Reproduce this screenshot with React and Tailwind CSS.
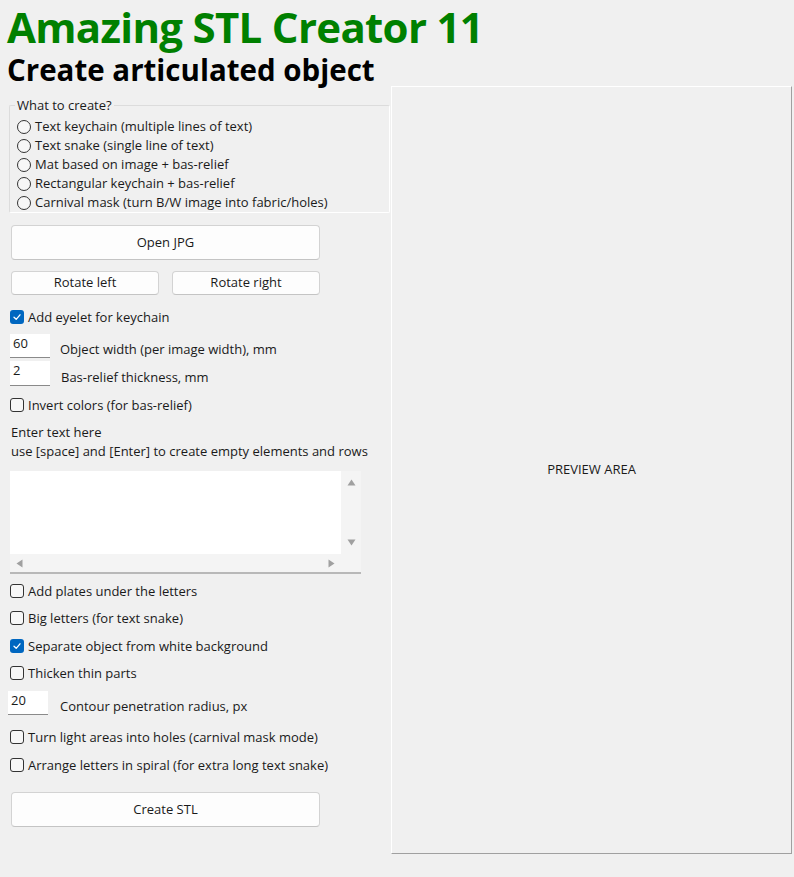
import React from "react";

const font = { fontFamily: '"Open Sans", "Noto Sans", sans-serif' };

function Radio({ label }) {
  return (
    <div className="flex items-center h-[19px] pl-[7px]">
      <span className="w-[14px] h-[14px] rounded-full border border-[#333] bg-[#f7f7f7] shrink-0" />
      <span className="ml-[4px] text-[13px] text-[#1a1a1a] leading-none">{label}</span>
    </div>
  );
}

function Check({ label, checked, className = "" }) {
  return (
    <div className={"flex items-center h-[18px] pl-[10px] " + className}>
      {checked ? (
        <span className="w-[14px] h-[14px] rounded-[3px] bg-[#0067c0] flex items-center justify-center shrink-0">
          <svg width="10" height="10" viewBox="0 0 10 10">
            <path d="M2 5.2 L4.2 7.3 L8 2.8" fill="none" stroke="#fff" strokeWidth="1.3" strokeLinecap="round" strokeLinejoin="round" />
          </svg>
        </span>
      ) : (
        <span className="w-[14px] h-[14px] rounded-[3px] border border-[#333] bg-[#f7f7f7] shrink-0" />
      )}
      <span className="ml-[4px] text-[13px] text-[#1a1a1a] leading-none">{label}</span>
    </div>
  );
}

function Btn({ children, className = "" }) {
  return (
    <div
      className={
        "flex items-center justify-center bg-[#fdfdfd] border border-[#d3d3d3] border-b-[#c4c4c4] rounded-[4px] text-[13px] text-[#1a1a1a] " +
        className
      }
    >
      {children}
    </div>
  );
}

function NumInput({ value, label, className = "" }) {
  return (
    <div className={"flex items-end " + className}>
      <div className="w-[40px] h-full bg-white border-b border-[#8a8a8a] text-[13px] text-[#1a1a1a] pl-[3px] pt-[3px] leading-none">
        {value}
      </div>
      <span className="text-[13px] text-[#1a1a1a] leading-none pb-[2px]">{label}</span>
    </div>
  );
}

export default function App() {
  return (
    <div className="w-[794px] h-[877px] bg-[#f0f0f0] overflow-hidden" style={font}>
      <div className="pl-[7px]">
        <div className="text-[42px] font-bold text-[#008000] leading-[54px] h-[54px] tracking-[-0.7px] whitespace-nowrap">
          Amazing STL Creator 11
        </div>
        <div className="text-[29.5px] font-bold text-black leading-[32px] h-[32px] whitespace-nowrap">
          Create articulated object
        </div>
      </div>
      <div className="flex items-start">
        <div className="w-[391px] shrink-0">
          <fieldset className="mt-[12px] ml-[9px] w-[381px] h-[115px] border border-[#dcdcdc] border-r-[#fff] border-b-[#fff] rounded-[2px]">
            <legend className="ml-[5px] px-[2px] text-[13px] text-[#1a1a1a] leading-[14px]">What to create?</legend>
            <div className="pt-[5px]">
              <Radio label="Text keychain (multiple lines of text)" />
              <Radio label="Text snake (single line of text)" />
              <Radio label="Mat based on image + bas-relief" />
              <Radio label="Rectangular keychain + bas-relief" />
              <Radio label="Carnival mask (turn B/W image into fabric/holes)" />
            </div>
          </fieldset>

          <Btn className="mt-[12px] ml-[11px] w-[309px] h-[35px]">Open JPG</Btn>
          <div className="flex mt-[11px] ml-[11px] gap-[13px]">
            <Btn className="w-[148px] h-[24px]">Rotate left</Btn>
            <Btn className="w-[148px] h-[24px]">Rotate right</Btn>
          </div>

          <Check className="mt-[13px]" label="Add eyelet for keychain" checked />

          <NumInput className="mt-[8px] ml-[10px] h-[24px] gap-[10px]" value="60" label="Object width (per image width), mm" />
          <NumInput className="mt-[3px] ml-[10px] h-[25px] gap-[11px]" value="2" label="Bas-relief thickness, mm" />

          <Check className="mt-[10px]" label="Invert colors (for bas-relief)" />

          <div className="mt-[9px] ml-[11px] text-[13px] text-[#1a1a1a] leading-[19px]">
            <div>Enter text here</div>
            <div>use [space] and [Enter] to create empty elements and rows</div>
          </div>

          <div className="mt-[10px] ml-[10px] w-[351px] h-[103px] bg-[#f4f4f4] border-b-2 border-[#b8b8b8] flex flex-col">
            <div className="flex flex-1">
              <div className="flex-1 bg-white" />
              <div className="w-[20px] flex flex-col items-center justify-between py-[8px]">
                <svg width="9" height="7" viewBox="0 0 9 7"><path d="M4.5 0.5 L8.5 6.5 L0.5 6.5 Z" fill="#a0a0a0" /></svg>
                <svg width="9" height="7" viewBox="0 0 9 7"><path d="M0.5 0.5 L8.5 0.5 L4.5 6.5 Z" fill="#a0a0a0" /></svg>
              </div>
            </div>
            <div className="h-[18px] flex items-center justify-between pl-[6px] pr-[26px]">
              <svg width="7" height="9" viewBox="0 0 7 9"><path d="M0.5 4.5 L6.5 0.5 L6.5 8.5 Z" fill="#a0a0a0" /></svg>
              <svg width="7" height="9" viewBox="0 0 7 9"><path d="M0.5 0.5 L6.5 4.5 L0.5 8.5 Z" fill="#a0a0a0" /></svg>
            </div>
          </div>

          <Check className="mt-[8px]" label="Add plates under the letters" />
          <Check className="mt-[9px]" label="Big letters (for text snake)" />
          <Check className="mt-[10px]" label="Separate object from white background" checked />
          <Check className="mt-[9px]" label="Thicken thin parts" />

          <NumInput className="mt-[9px] ml-[8px] h-[24px] gap-[12px]" value="20" label="Contour penetration radius, px" />

          <Check className="mt-[13px]" label="Turn light areas into holes (carnival mask mode)" />
          <Check className="mt-[10px]" label="Arrange letters in spiral (for extra long text snake)" />

          <Btn className="mt-[18px] ml-[11px] w-[309px] h-[35px]">Create STL</Btn>
        </div>

        <div className="w-[401px] h-[768px] border border-t-white border-l-white border-r-[#a0a0a0] border-b-[#a0a0a0] flex items-center justify-center">
          <span className="text-[13px] text-[#1a1a1a]">PREVIEW AREA</span>
        </div>
      </div>
    </div>
  );
}
